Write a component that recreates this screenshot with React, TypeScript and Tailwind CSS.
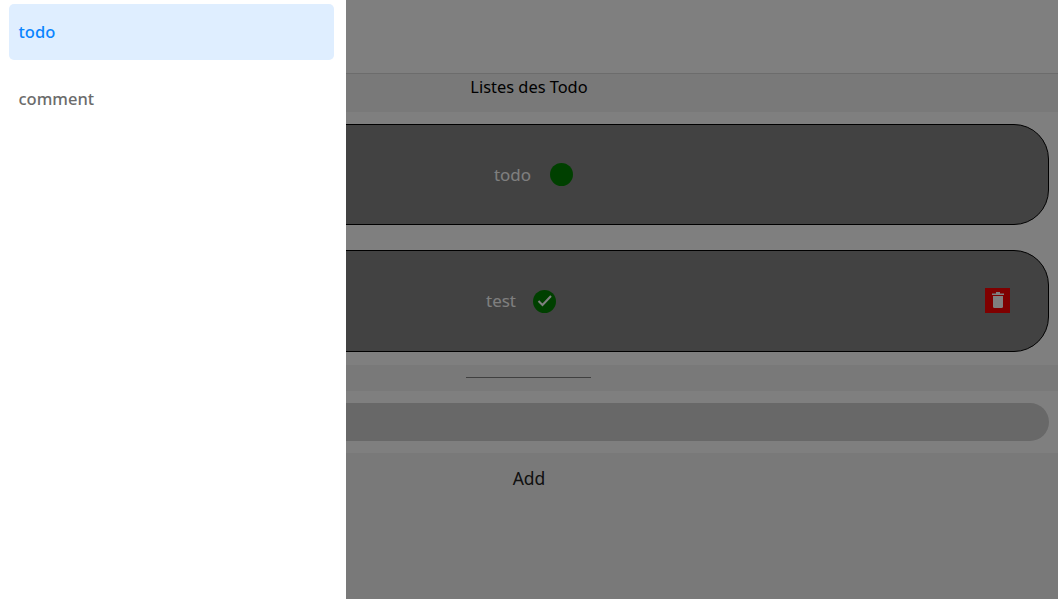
import React from 'react';

function TodoRow({ label, done }: { label: string; done: boolean }) {
  return (
    <div className={(done ? 'h-[102px]' : 'h-[101px]') + ' flex items-center rounded-[35px] border border-black bg-[#848484]'}>
      <div className="flex-1" />
      <div className={done ? 'flex items-center gap-[17px] mr-[16px]' : 'flex items-center gap-[19px] ml-[9px]'}>
        <span className="text-[17px] text-white">{label}</span>
        {done ? (
          <span className="flex h-[23px] w-[23px] items-center justify-center rounded-full bg-[#008000]">
            <svg width="16" height="16" viewBox="0 0 16 16" fill="none" stroke="white" strokeWidth="2">
              <path d="M1.5 8 L5.5 12 L14 3" />
            </svg>
          </span>
        ) : (
          <span className="h-[23px] w-[23px] rounded-full bg-[#008000]" />
        )}
      </div>
      <div className="flex flex-1 justify-end">
        {done && (
          <button className="mr-[38px] mb-[2px] flex h-[25px] w-[25px] items-center justify-center bg-[#ff0000]">
            <svg width="12" height="16" viewBox="0 0 12 16" fill="white">
              <path d="M4 0 H8 V1.5 H12 V3 H0 V1.5 H4 Z" />
              <path d="M1 4 H11 V14.5 Q11 16 9.5 16 H2.5 Q1 16 1 14.5 Z" />
            </svg>
          </button>
        )}
      </div>
    </div>
  );
}

export default function App() {
  return (
    <div className="relative flex h-screen flex-col overflow-hidden bg-white font-['Noto_Sans','Open_Sans',sans-serif] text-black">
      <header className="h-[74px] shrink-0 border-b border-[#d8d8d8] bg-white" />

      <div className="h-[38px] shrink-0 bg-[#f2f2f2] text-center text-[16.4px] leading-[25px]">Listes des Todo</div>

      <main className="flex shrink-0 flex-col gap-[25px] px-[9px] pt-[12px] pb-[13px]">
        <TodoRow label="todo" done={false} />
        <TodoRow label="test" done={true} />
      </main>

      <div className="flex h-[26px] shrink-0 justify-center bg-[#f2f2f2] pt-[12px] pr-px">
        <div className="h-px w-[125px] bg-[#808080]" />
      </div>

      <div className="shrink-0 px-[9px] py-[12px]">
        <input className="block h-[38px] w-full rounded-full bg-[#d0d0d0] px-4 outline-none" />
      </div>

      <button className="flex flex-1 flex-col self-stretch bg-[#f2f2f2] pt-[13px] text-center text-[17.5px] leading-[25px] text-[#222]">
        Add
      </button>

      {/* drawer + backdrop */}
      <div className="absolute inset-0 bg-black/50" />
      <nav className="absolute inset-y-0 left-0 w-[346px] bg-white pl-[9px] pr-[12px] pt-[4px] font-medium">
        <a className="flex h-[56px] items-center rounded-[5px] bg-[#dfeeff] px-[9.5px] text-[16.5px] text-[#0a84ff]">todo</a>
        <a className="mt-[11px] flex h-[56px] items-center px-[9.5px] text-[16.5px] text-[#6b6b6b]">comment</a>
      </nav>
    </div>
  );
}
